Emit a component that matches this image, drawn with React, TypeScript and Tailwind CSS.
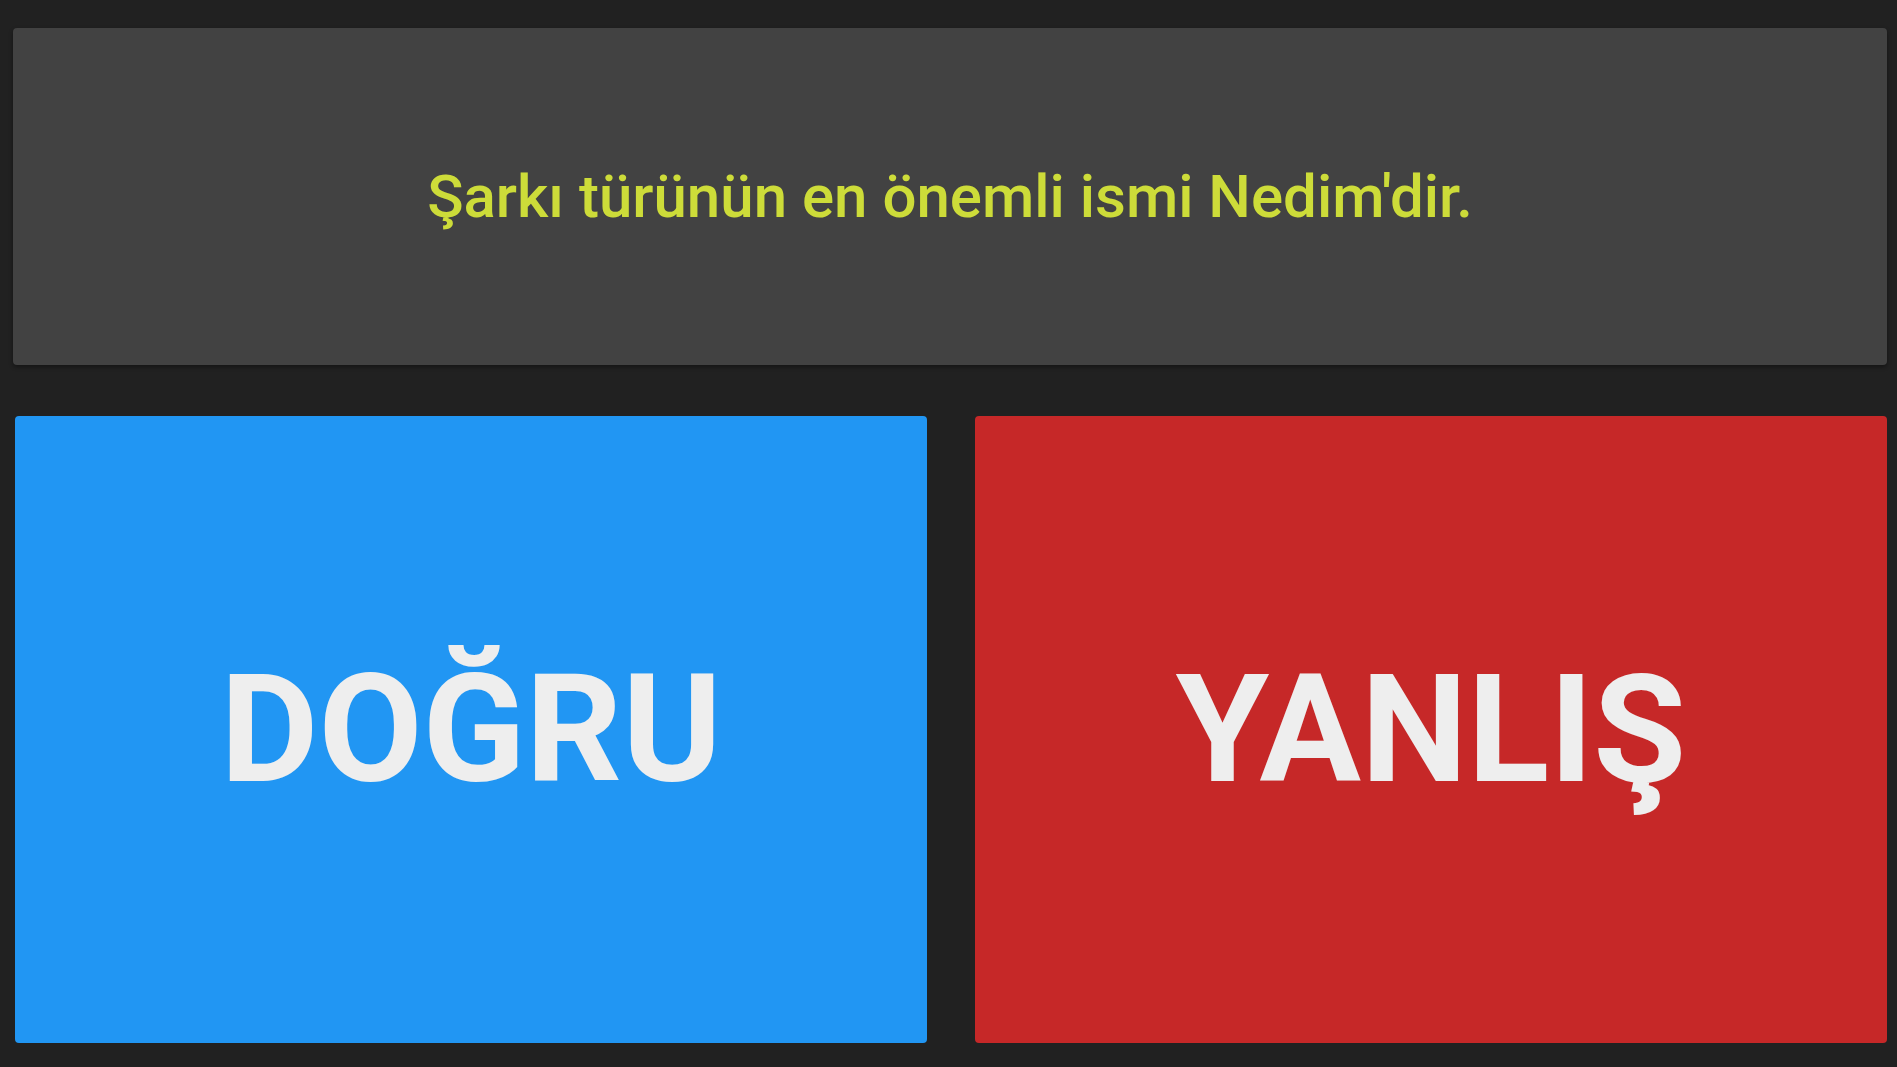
import React from "react";

export default function App() {
  return (
    <div
      className="w-full h-screen bg-[#212121] flex flex-col pt-[28px] pb-[24px] pl-[13px] pr-[10px] overflow-hidden"
      style={{ fontFamily: "Roboto, 'Noto Sans', sans-serif" }}
    >
      <div className="h-[337px] shrink-0 bg-[#424242] rounded-[4px] shadow-[0_2px_4px_rgba(0,0,0,0.4)] flex items-center justify-center">
        <p className="text-[60px] font-medium text-[#cddc39] leading-none">
          Şarkı türünün en önemli ismi Nedim'dir.
        </p>
      </div>
      <div className="flex-1 mt-[51px] ml-[2px] grid grid-cols-2 gap-[48px]">
        <button className="bg-[#2196f3] rounded-[4px] flex items-center justify-center text-[#eeeeee] text-[151px] font-bold leading-none">
          DOĞRU
        </button>
        <button className="bg-[#c62828] rounded-[4px] flex items-center justify-center text-[#eeeeee] text-[151px] font-bold leading-none">
          YANLIŞ
        </button>
      </div>
    </div>
  );
}
